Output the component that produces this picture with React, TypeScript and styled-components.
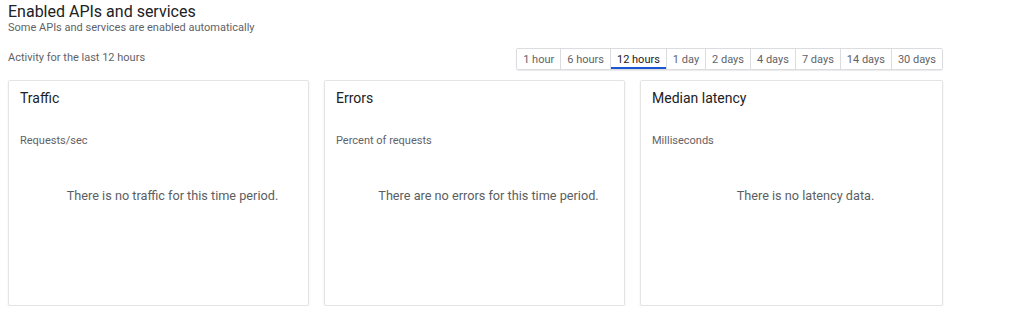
import React from "react";
import styled, { createGlobalStyle } from "styled-components";

const GlobalStyle = createGlobalStyle`
  body {
    margin: 0;
    background: #ffffff;
    font-family: Roboto, "Noto Sans", Arial, sans-serif;
    color: #202124;
  }
`;

const Page = styled.div`
  width: 935px;
  padding: 2px 8px 0;
`;

const Title = styled.h1`
  margin: 0;
  font-size: 16px;
  font-weight: 400;
  line-height: 19px;
  color: #202124;
`;

const Subtitle = styled.div`
  font-size: 11px;
  line-height: 14px;
  color: #5f6368;
`;

const ActivityRow = styled.div`
  display: flex;
  align-items: center;
  justify-content: space-between;
  margin-top: 13px;
`;

const ActivityLabel = styled.div`
  font-size: 11px;
  color: #5f6368;
  margin-top: -3px;
`;

const RangeGroup = styled.div`
  display: flex;
  border: 1px solid #dadce0;
  border-radius: 2px;
  box-shadow: 0 1px 1px rgba(0, 0, 0, 0.08);
`;

const RangeButton = styled.button<{ $active?: boolean }>`
  font-family: inherit;
  font-size: 11px;
  height: 20px;
  padding: 0 6px;
  background: #fff;
  border: none;
  border-left: 1px solid #dadce0;
  color: ${(p) => (p.$active ? "#202124" : "#5f6368")};
  box-shadow: ${(p) => (p.$active ? "inset 0 -2px 0 #1a56d6" : "none")};
  cursor: pointer;
  &:first-child {
    border-left: none;
  }
`;

const Cards = styled.div`
  display: grid;
  grid-template-columns: 301px 301px 1fr;
  gap: 15px;
  margin-top: 10px;
`;

const Card = styled.div`
  height: 226px;
  border: 1px solid #e4e4e4;
  border-radius: 2px;
  box-shadow: 0 1px 2px rgba(0, 0, 0, 0.1);
  padding: 8px 11px 0;
  box-sizing: border-box;
  display: flex;
  flex-direction: column;
`;

const CardTitle = styled.div`
  font-size: 14px;
  line-height: 18px;
  color: #202124;
`;

const Unit = styled.div`
  margin-top: 27px;
  font-size: 11px;
  line-height: 14px;
  color: #5f6368;
`;

const Empty = styled.div`
  margin-top: 40px;
  padding-left: 28px;
  text-align: center;
  font-size: 12.7px;
  line-height: 16px;
  color: #5a5e62;
`;

const ranges = ["1 hour", "6 hours", "12 hours", "1 day", "2 days", "4 days", "7 days", "14 days", "30 days"];

const cards = [
  { title: "Traffic", unit: "Requests/sec", empty: "There is no traffic for this time period." },
  { title: "Errors", unit: "Percent of requests", empty: "There are no errors for this time period." },
  { title: "Median latency", unit: "Milliseconds", empty: "There is no latency data." },
];

const App: React.FC = () => {
  return (
    <>
      <GlobalStyle />
      <Page>
        <Title>Enabled APIs and services</Title>
        <Subtitle>Some APIs and services are enabled automatically</Subtitle>
        <ActivityRow>
          <ActivityLabel>Activity for the last 12 hours</ActivityLabel>
          <RangeGroup>
            {ranges.map((r) => (
              <RangeButton key={r} $active={r === "12 hours"}>
                {r}
              </RangeButton>
            ))}
          </RangeGroup>
        </ActivityRow>
        <Cards>
          {cards.map((c) => (
            <Card key={c.title}>
              <CardTitle>{c.title}</CardTitle>
              <Unit>{c.unit}</Unit>
              <Empty>{c.empty}</Empty>
            </Card>
          ))}
        </Cards>
      </Page>
    </>
  );
};

export default App;
